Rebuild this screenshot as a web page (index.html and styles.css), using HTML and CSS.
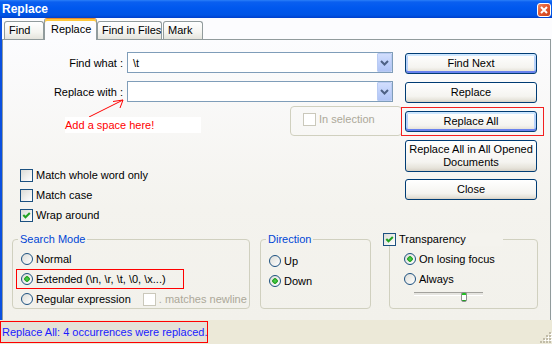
FILE: index.html
```html
<!DOCTYPE html>
<html lang="en">
<head>
    <meta charset="UTF-8">
    <title>Replace</title>
    <link rel="stylesheet" href="styles.css">
</head>
<body>

    <div class="dialog">
        <div class="titlebar">
            <span class="title">Replace</span>
            <span class="close-btn">
                <svg width="14" height="14" viewBox="0 0 14 14">
                    <defs>
                        <linearGradient id="closeFill" x1="0" y1="0" x2="1" y2="1">
                            <stop offset="0" stop-color="#f08a64"/>
                            <stop offset="0.5" stop-color="#e2562d"/>
                            <stop offset="1" stop-color="#c8401c"/>
                        </linearGradient>
                    </defs>
                    <rect x="0.5" y="0.5" width="13" height="13" rx="2.5" fill="url(#closeFill)" stroke="#fff"/>
                    <path d="M4 4 L10 10 M10 4 L4 10" stroke="#fff" stroke-width="2"/>
                </svg>
            </span>
        </div>

        <div class="client">
            <div class="tabs">
                <div class="tab tab-find">Find</div>
                <div class="tab tab-replace active">Replace</div>
                <div class="tab tab-files">Find in Files</div>
                <div class="tab tab-mark">Mark</div>
            </div>

            <div class="panel">
                <div class="top">
                    <div class="fields">
                        <div class="field-row">
                            <span class="field-label">Find what :</span>
                            <div class="combo">
                                <span class="combo-text">\t</span>
                                <span class="combo-btn">
                                    <svg width="15" height="19" viewBox="0 0 15 19"><path d="M4 8 L7.5 11.5 L11 8" fill="none" stroke="#4d6185" stroke-width="2"/></svg>
                                </span>
                            </div>
                        </div>
                        <div class="field-row">
                            <span class="field-label">Replace with :</span>
                            <div class="combo">
                                <span class="combo-text"></span>
                                <span class="combo-btn">
                                    <svg width="15" height="19" viewBox="0 0 15 19"><path d="M4 8 L7.5 11.5 L11 8" fill="none" stroke="#4d6185" stroke-width="2"/></svg>
                                </span>
                            </div>
                        </div>

                        <div class="note-row">
                            <div class="note">
                                <svg class="note-arrow" width="40" height="18" viewBox="0 0 40 18">
                                    <path d="M3 18 L37 1 M37 1 L27 2.5 M37 1 L34 9" fill="none" stroke="#ff0000" stroke-width="1"/>
                                </svg>
                                <div class="note-text">Add a space here!</div>
                            </div>
                            <div class="in-selection">
                                <span class="chk off"></span>
                                <span class="muted">In selection</span>
                            </div>
                        </div>

                        <div class="checks">
                            <div class="opt"><span class="chk"></span>Match whole word only</div>
                            <div class="opt"><span class="chk"></span>Match case</div>
                            <div class="opt">
                                <span class="chk">
                                    <svg width="11" height="11" viewBox="0 0 11 11"><path d="M2.3 5 L4.5 7.3 L8.8 3" fill="none" stroke="#21a121" stroke-width="2"/></svg>
                                </span>Wrap around
                            </div>
                        </div>
                    </div>

                    <div class="buttons">
                        <button class="btn default">Find Next</button>
                        <button class="btn">Replace</button>
                        <div class="highlight"><button class="btn default">Replace All</button></div>
                        <button class="btn tall">Replace All in All Opened<br>Documents</button>
                        <button class="btn close">Close</button>
                    </div>
                </div>

                <div class="groups">
                    <div class="group group-mode">
                        <div class="group-title">Search Mode</div>
                        <div class="radio-list">
                            <div class="opt"><span class="radio"></span>Normal</div>
                            <div class="opt marked-row"><span class="radio on"></span>Extended (\n, \r, \t, \0, \x...)</div>
                            <div class="opt">
                                <span class="radio"></span>Regular expression
                                <span class="chk off newline"></span><span class="muted">. matches newline</span>
                            </div>
                        </div>
                    </div>

                    <div class="group group-dir">
                        <div class="group-title">Direction</div>
                        <div class="radio-list">
                            <div class="opt"><span class="radio"></span>Up</div>
                            <div class="opt"><span class="radio on"></span>Down</div>
                        </div>
                    </div>

                    <div class="group group-trans">
                        <div class="trans-title">
                            <span class="chk">
                                <svg width="11" height="11" viewBox="0 0 11 11"><path d="M2.3 5 L4.5 7.3 L8.8 3" fill="none" stroke="#21a121" stroke-width="2"/></svg>
                            </span>Transparency
                        </div>
                        <div class="radio-list">
                            <div class="opt"><span class="radio on"></span>On losing focus</div>
                            <div class="opt"><span class="radio"></span>Always</div>
                        </div>
                        <div class="slider">
                            <div class="slider-track"></div>
                            <div class="slider-thumb"></div>
                        </div>
                    </div>
                </div>
            </div>
        </div>

        <div class="status">
            <div class="status-text">Replace All: 4 occurrences were replaced.</div>
            <svg class="grip" width="12" height="12" viewBox="0 0 12 12">
                <g fill="#fff">
                    <rect x="10" y="2" width="2" height="2"/><rect x="7" y="5" width="2" height="2"/><rect x="10" y="5" width="2" height="2"/>
                    <rect x="4" y="8" width="2" height="2"/><rect x="7" y="8" width="2" height="2"/><rect x="10" y="8" width="2" height="2"/>
                </g>
                <g fill="#c1bca8">
                    <rect x="9" y="1" width="2" height="2"/><rect x="6" y="4" width="2" height="2"/><rect x="9" y="4" width="2" height="2"/>
                    <rect x="3" y="7" width="2" height="2"/><rect x="6" y="7" width="2" height="2"/><rect x="9" y="7" width="2" height="2"/>
                    <rect x="0" y="10" width="2" height="2"/><rect x="3" y="10" width="2" height="2"/><rect x="6" y="10" width="2" height="2"/><rect x="9" y="10" width="2" height="2"/>
                </g>
            </svg>
        </div>
    </div>

</body>
</html>
```

FILE: styles.css
```css
body {
    margin: 0;
    width: 552px;
    height: 344px;
    overflow: hidden;
    font-family: "Liberation Sans", Arial, sans-serif;
    font-size: 11px;
    color: #000;
    background-color: #fcfcfe;
}
.dialog {
    display: flex;
    flex-direction: column;
    height: 344px;
}

/* title bar */
.titlebar {
    height: 18px;
    flex: none;
    display: flex;
    align-items: center;
    justify-content: space-between;
    padding: 0 1px 0 2px;
    background: linear-gradient(#2b7ff8 0, #0a5ff0 2px, #0058ee 8px, #0054e5 15px, #0040cc 18px);
}
.title {
    color: #fff;
    font-weight: bold;
    font-size: 12px;
}
.close-btn {
    display: flex;
    margin-top: 2px;
}

/* client area */
.client {
    flex: 1;
    display: flex;
    flex-direction: column;
    border-left: 2px solid #0a50e0;
}
.tabs {
    height: 21px;
    flex: none;
    display: flex;
    align-items: flex-end;
    padding-left: 2px;
}
.tab {
    box-sizing: border-box;
    height: 18px;
    border: 1px solid #919b9c;
    border-bottom: none;
    border-radius: 3px 3px 0 0;
    background: linear-gradient(#fff, #f4f4f0 60%, #e4e3dc);
    padding-left: 4px;
    line-height: 17px;
    white-space: nowrap;
}
.tab-find {
    width: 40px;
}
.tab-replace {
    width: 53px;
}
.tab-files {
    width: 65px;
}
.tab-mark {
    width: 40px;
    margin-left: 1px;
}
.tab.active {
    position: relative;
    z-index: 1;
    height: 22px;
    margin-bottom: -1px;
    padding: 2px 0 0 6px;
    border-top-color: #e68b2c;
    background: #fcfcfe;
    box-shadow: inset 0 2px 0 #ffc83c;
}

.panel {
    flex: 1;
    display: flex;
    flex-direction: column;
    margin-right: 1px;
    border: 1px solid #919b9c;
    border-bottom: none;
    background: linear-gradient(#fcfcfe, #f4f3ee 60%, #f2f1eb);
}
.top {
    display: flex;
}
.fields {
    width: 402px;
    padding-top: 12px;
}
.field-row {
    display: flex;
    align-items: center;
    height: 21px;
}
.field-row + .field-row {
    margin-top: 8px;
}
.field-label {
    width: 120px;
    margin-right: 4px;
    text-align: right;
}
.combo {
    box-sizing: border-box;
    width: 266px;
    height: 21px;
    border: 1px solid #7f9db9;
    background: #fff;
    display: flex;
    align-items: center;
}
.combo-text {
    padding-left: 5px;
}
.combo-btn {
    margin-left: auto;
    width: 15px;
    height: 19px;
    box-sizing: border-box;
    border: 1px solid #b9cbf3;
    border-radius: 1px;
    background: linear-gradient(#d2defd, #bccefa 60%, #b0c4f5);
    display: flex;
}
.combo-btn svg {
    margin: -1px;
}

.note-row {
    display: flex;
    height: 34px;
}
.note {
    margin-left: 62px;
    width: 136px;
}
.note-arrow {
    display: block;
    margin: -3px 0 0 21px;
}
.note-text {
    height: 16px;
    line-height: 16px;
    background: #fff;
    color: #ff0000;
}
.in-selection {
    box-sizing: border-box;
    width: 112px;
    height: 30px;
    margin: 4px 0 0 89px;
    padding: 6px 0 0 12px;
    border: 1px solid #d0d0bf;
    border-radius: 4px;
    display: flex;
    align-items: flex-start;
    line-height: 13px;
}
.muted {
    color: #aca899;
}

.checks {
    margin: 29px 0 0 17px;
}
.opt {
    display: flex;
    align-items: center;
    height: 20px;
    white-space: nowrap;
}
.chk {
    box-sizing: border-box;
    width: 13px;
    height: 13px;
    flex: none;
    margin-right: 3px;
    border: 1px solid #1c5180;
    background: linear-gradient(135deg, #dcdcd7, #fff);
    display: flex;
}
.chk.off {
    border-color: #cac8bb;
    background: #fff;
}
.radio {
    box-sizing: border-box;
    width: 12px;
    height: 12px;
    flex: none;
    margin: 0 3px 0 0;
    border: 1px solid #1c5180;
    border-radius: 50%;
    background: linear-gradient(135deg, #dcdcd7, #fff);
}
.radio.on {
    background: radial-gradient(circle, #55d355 0, #21a121 2.5px, transparent 3px), linear-gradient(135deg, #dcdcd7, #fff);
}

/* buttons column */
.buttons {
    width: 132px;
    padding-top: 13px;
    display: flex;
    flex-direction: column;
    gap: 8px;
}
.btn {
    box-sizing: border-box;
    height: 21px;
    padding: 0;
    border: 1px solid #003c74;
    border-radius: 3px;
    background: linear-gradient(#fff, #f5f4f0 70%, #e6e3da 90%, #d6d0c5);
    font-family: inherit;
    font-size: 11px;
    line-height: 13px;
    color: #000;
    white-space: nowrap;
}
.btn.default {
    box-shadow: inset 0 2px 0 #cee7ff, inset 0 -2px 0 #6982ee, inset 2px 0 0 #b8d2fa, inset -2px 0 0 #b8d2fa;
}
.btn.tall {
    height: 32px;
}
.btn.close {
    margin-top: -1px;
}
.highlight {
    display: flex;
    margin: -3px -6px -3px -3px;
    padding: 3px 6px 3px 3px;
    box-shadow: 0 0 0 1px #f31f1f;
}
.highlight .btn {
    width: 132px;
}

/* option groups */
.groups {
    display: flex;
    align-items: flex-start;
    margin: 14px 0 0 9px;
}
.group {
    box-sizing: border-box;
    height: 70px;
    padding: 0 8px;
    border: 1px solid #d0d0bf;
    border-radius: 4px;
}
.group-mode {
    width: 238px;
}
.group-dir {
    width: 111px;
    margin-left: 10px;
}
.group-trans {
    width: 149px;
    margin-left: 18px;
    padding-left: 14px;
}
.group-title {
    width: fit-content;
    height: 13px;
    margin: -7px 0 0 -3px;
    padding: 0 2px;
    line-height: 13px;
    background: #f4f3ee;
    color: #0046d5;
}
.trans-title {
    width: 120px;
    height: 13px;
    margin: -7px 0 0 -21px;
    display: flex;
    align-items: center;
    line-height: 13px;
    background: #f4f3ee;
}
.radio-list {
    margin-top: 3px;
}
.group-dir .radio-list {
    margin-top: 5px;
}
.marked-row {
    box-sizing: border-box;
    width: 168px;
    margin-left: -5px;
    padding-left: 4px;
    border: 1px solid #ff0000;
}
.chk.newline {
    margin-left: 12px;
}
.slider {
    position: relative;
    width: 69px;
    height: 10px;
    margin: 2px 0 0 10px;
}
.slider-track {
    margin-top: 3px;
    height: 2px;
    border-top: 1px solid #a3a29d;
    border-bottom: 1px solid #fff;
    background: #e6e5e0;
}
.slider-thumb {
    position: absolute;
    left: 47px;
    top: 0;
    box-sizing: border-box;
    width: 6px;
    height: 10px;
    border: 1px solid #8e8f8f;
    border-radius: 2px;
    background: linear-gradient(#21c121 0, #21c121 2px, #fff 2px, #fff 7px, #21a121 7px);
}

/* status bar */
.status {
    height: 24px;
    flex: none;
    display: flex;
    justify-content: space-between;
    background: #ece9d8;
}
.status-text {
    box-sizing: border-box;
    width: 208px;
    height: 22px;
    margin-top: 1px;
    padding-left: 1px;
    border: 1px solid #ff0000;
    line-height: 20px;
    background: #e4e2d8;
    color: #1a1aff;
    white-space: nowrap;
}
.grip {
    align-self: flex-end;
    margin: 0 0 1px 0;
}
```
